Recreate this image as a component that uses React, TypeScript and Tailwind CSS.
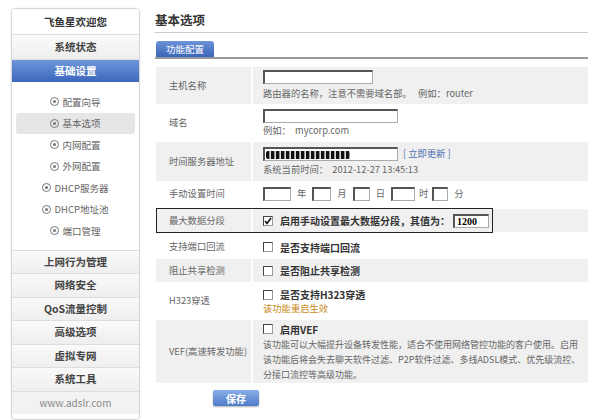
import { ReactNode } from "react";

const font = { fontFamily: '"Noto Sans CJK SC", "Liberation Sans", sans-serif' };

const subItems = ["配置向导", "基本选项", "内网配置", "外网配置", "DHCP服务器", "DHCP地址池", "端口管理"];
const bottomItems = ["上网行为管理", "网络安全", "QoS流量控制", "高级选项", "虚拟专网", "系统工具"];

const Ring = () => (
  <span className="inline-block w-[9px] h-[9px] rounded-full border border-[#777] mr-[3px]">
    <span className="block w-[3px] h-[3px] rounded-full bg-[#777] m-[2px]" />
  </span>
);

const Sidebar = () => (
  <div className="w-[129px] ml-[11px] mt-[8px] border border-[#d6d6d6] rounded-[4px] overflow-hidden shadow-[0_0_2px_rgba(0,0,0,0.1)]">
    <div className="h-[26px] flex items-center justify-center text-[10.5px] font-semibold text-[#333] bg-white border-b border-[#ddd]">
      飞鱼星欢迎您
    </div>
    <div className="h-[25px] flex items-center justify-center text-[10.5px] font-semibold text-[#444] bg-gradient-to-b from-[#fafafa] to-[#eeeeee] border-b border-[#ddd]">
      系统状态
    </div>
    <div className="h-[22px] flex items-center justify-center text-[10.5px] font-bold text-white bg-gradient-to-b from-[#7097dc] to-[#3b67bb]">
      基础设置
    </div>
    <div className="bg-white pt-[9px] pb-[8px] px-[4px] flex flex-col border-b border-[#ddd]">
      {subItems.map((s) => (
        <div
          key={s}
          className={`h-[21.5px] flex items-center justify-center text-[9.5px] text-[#666] rounded-[3px] ${
            s === "基本选项" ? "bg-[#e6e6e6]" : ""
          }`}
        >
          <Ring />
          {s}
        </div>
      ))}
    </div>
    {bottomItems.map((s) => (
      <div
        key={s}
        className="h-[23.5px] flex items-center justify-center text-[10.5px] font-semibold text-[#444] bg-gradient-to-b from-[#fafafa] to-[#eeeeee] border-b border-[#ddd]"
      >
        {s}
      </div>
    ))}
    <div className="h-[22px] flex items-center justify-center text-[10px] text-[#888] bg-[#f2f2f2]">
      www.adslr.com
    </div>
  </div>
);

const Input = ({ w, value, bold }: { w: string; value?: string; bold?: boolean }) => (
  <span
    className={`inline-block h-[14px] ${w} bg-white border border-[#aaa] border-t-[#555] border-l-[#555] border-t-2 border-l-2 align-middle text-[10px] leading-[11px] pl-[2px] ${
      bold ? "font-bold text-black" : ""
    }`}
    style={{ fontFamily: '"Liberation Serif", serif' }}
  >
    {value}
  </span>
);

const Check = ({ checked }: { checked?: boolean }) => (
  <span className="inline-flex items-center justify-center w-[10px] h-[10px] border border-[#999] border-t-[#444] border-l-[#444] bg-white mr-[7px]">
    {checked && (
      <svg width="8" height="8" viewBox="0 0 8 8">
        <path d="M1 4 L3 6.5 L7 1" stroke="#111" strokeWidth="1.6" fill="none" />
      </svg>
    )}
  </span>
);

const Row = ({
  label,
  gray,
  h,
  children,
  boxed,
}: {
  label: string;
  gray?: boolean;
  h: string;
  children: ReactNode;
  boxed?: boolean;
}) => (
  <div className={`flex ${h} mb-[1px] relative`}>
    <div
      className={`w-[95px] mr-[2px] flex items-center pl-[13px] text-[9.3px] text-[#666] ${gray ? "bg-[#f0f0f0]" : ""}`}
    >
      {label}
    </div>
    <div className={`flex-1 flex flex-col justify-center pl-[10px] text-[9.3px] text-[#666] ${gray ? "bg-[#f0f0f0]" : ""}`}>
      {children}
    </div>
    {boxed && (
      <div className="absolute left-0 top-[-1px] w-[337px] bottom-[-1px] border border-[#222] pointer-events-none" />
    )}
  </div>
);

export default function App() {
  return (
    <div className="w-[600px] h-[420px] bg-white flex overflow-hidden" style={font}>
      <Sidebar />
      <div className="ml-[15px] w-[433px] flex flex-col">
        <div className="mt-[11px] text-[12.5px] font-bold text-[#333] leading-[18px] pb-[3px] border-b border-[#ccc]">
          基本选项
        </div>
        <div className="mt-[8px] flex border-b-2 border-[#999]">
          <div className="w-[58px] h-[16px] ml-[1px] bg-gradient-to-b from-[#6d93d8] to-[#3a66b9] text-white text-[9.5px] flex items-center justify-center rounded-t-[3px]">
            功能配置
          </div>
        </div>
        <div className="mt-[8px] ml-[1px] flex flex-col">
          <Row label="主机名称" gray h="h-[37px]">
            <Input w="w-[110px]" />
            <span className="mt-[3px]">
              路由器的名称，注意不需要域名部。&nbsp;&nbsp;&nbsp;例如：router
            </span>
          </Row>
          <Row label="域名" h="h-[36px]">
            <Input w="w-[135px]" />
            <span className="mt-[1px]">例如：&nbsp;&nbsp;mycorp.com</span>
          </Row>
          <Row label="时间服务器地址" gray h="h-[39px]">
            <div className="flex items-center">
              <span className="inline-block h-[14px] w-[135px] bg-white border-t-2 border-l-2 border-[#555] border-r border-b border-r-[#aaa] border-b-[#aaa] relative overflow-hidden">
                <span className="absolute left-[1px] top-[2px] h-[8px] w-[84px] bg-[repeating-linear-gradient(90deg,#111_0px,#111_3px,#777_3px,#fff_5px)] rounded-[2px]" />
              </span>
              <span className="ml-[5px] text-[#4a6fb0]">[ 立即更新 ]</span>
            </div>
            <span className="mt-[2px]">系统当前时间：&nbsp;&nbsp;2012-12-27 13:45:13</span>
          </Row>
          <Row label="手动设置时间" h="h-[23px]">
            <div className="flex items-center">
              <Input w="w-[28px]" />
              <span className="mx-[6px]">年</span>
              <Input w="w-[19px]" />
              <span className="mx-[6px]">月</span>
              <Input w="w-[17px]" />
              <span className="mx-[6px]">日</span>
              <Input w="w-[24px]" />
              <span className="mx-[4px]">时</span>
              <Input w="w-[16px]" />
              <span className="mx-[6px]">分</span>
            </div>
          </Row>
          <div className="h-[3px]" />
          <Row label="最大数据分段" gray h="h-[23px]" boxed>
            <div className="flex items-center">
              <Check checked />
              <span className="font-bold text-[#333] text-[10px]">启用手动设置最大数据分段，其值为：</span>
              <span className="ml-[3px]">
                <Input w="w-[36px]" value="1200" bold />
              </span>
            </div>
          </Row>
          <div className="h-[3px]" />
          <Row label="支持端口回流" h="h-[22px]">
            <div className="flex items-center">
              <Check />
              <span className="font-bold text-[#333] text-[10px]">是否支持端口回流</span>
            </div>
          </Row>
          <Row label="阻止共享检测" gray h="h-[23px]">
            <div className="flex items-center">
              <Check />
              <span className="font-bold text-[#333] text-[10px]">是否阻止共享检测</span>
            </div>
          </Row>
          <Row label="H323穿透" h="h-[36px]">
            <div className="flex items-center">
              <Check />
              <span className="font-bold text-[#333] text-[10px]">是否支持H323穿透</span>
            </div>
            <span className="text-[#c98a1a] leading-[13px]">该功能重启生效</span>
          </Row>
          <Row label="VEF(高速转发功能)" gray h="h-[63px]">
            <div className="flex items-center">
              <Check />
              <span className="font-bold text-[#333] text-[10px]">启用VEF</span>
            </div>
            <span className="leading-[15px] pr-[2px] text-[9px]">
              该功能可以大幅提升设备转发性能，适合不使用网络管控功能的客户使用。启用该功能后将会失去聊天软件过滤、P2P软件过滤、多线ADSL模式、优先级流控、分接口流控等高级功能。
            </span>
          </Row>
        </div>
        <div className="mt-[6px] ml-[58px]">
          <div className="w-[46px] h-[16px] rounded-[2px] bg-gradient-to-b from-[#8aaee6] to-[#4f7cc8] text-white text-[10px] font-bold flex items-center justify-center shadow-[0_1px_2px_rgba(0,0,0,0.3)]">
            保存
          </div>
        </div>
      </div>
    </div>
  );
}
